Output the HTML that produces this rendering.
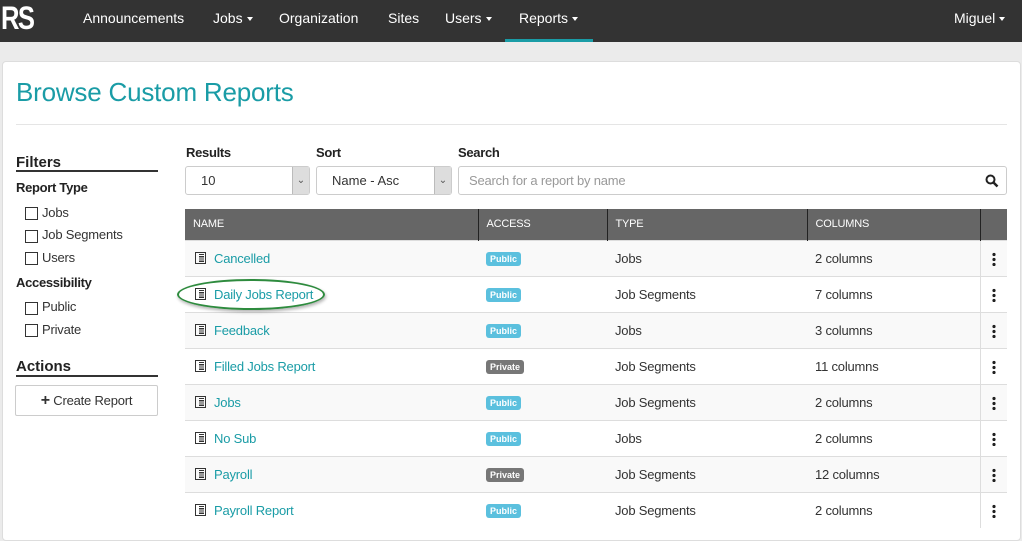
<!DOCTYPE html>
<html><head><meta charset="utf-8"><style>
*{box-sizing:border-box;margin:0;padding:0}
body{width:1022px;height:528px;overflow:hidden;background:#ebebeb;font-family:"Liberation Sans",sans-serif;font-size:13px;color:#333;position:relative}
.a{position:absolute}
.nav{left:0;top:0;width:1022px;height:42px;background:#333}
.nav span{position:absolute;top:10px;color:#fff;font-size:14px;white-space:nowrap}
.car{display:inline-block;width:0;height:0;border-left:3.5px solid transparent;border-right:3.5px solid transparent;border-top:4px solid #fff;vertical-align:middle;margin-left:4px}
.card{left:2px;top:61px;width:1019px;height:480px;background:#fff;border:1px solid #ddd;border-radius:4px}
h1{position:absolute;left:16px;top:77px;font-size:26px;font-weight:normal;color:#1a9ca6;letter-spacing:-0.2px}
.hr{left:16px;top:124px;width:991px;height:1px;background:#e5e5e5}
.lbl{font-weight:bold;font-size:13px;color:#222;letter-spacing:-0.3px}
.cb{position:absolute;width:13px;height:13px;border:1px solid #333;background:#fff}
.ft{position:absolute;font-size:13px;color:#333;letter-spacing:-0.2px}
.sel{position:absolute;height:29px;border:1px solid #ccc;border-radius:3px;background:#fff;font-size:13px;color:#333}
.sel .ar{position:absolute;right:0;top:0;width:17px;height:27px;background:#ddd;border-left:1px solid #bbb;text-align:center;font-size:10px;line-height:27px;color:#555}
table{position:absolute;left:185px;top:209px;width:822px;border-collapse:collapse;letter-spacing:-0.2px}
th{background:#666;color:#fff;font-weight:normal;font-size:11px;text-align:left;height:31px;padding-left:8px;border-right:1px solid #222}
th:last-child{border-right:none}
td{height:36px;border-top:1px solid #ddd;padding-left:8px;font-size:13px;color:#333}
tr:nth-child(even) td{background:#f9f9f9}
td.n{color:#1a9ca6;padding-left:10px}
td.d{border-left:1px solid #ddd;text-align:center;padding:0}
.dots{display:inline-block;width:4px;height:14px;background:radial-gradient(circle,#222 1.6px,transparent 1.8px) 0 0/4px 5px repeat-y;vertical-align:middle}
.ic{display:inline-block;width:11px;height:12px;border:1.5px solid #333;margin-right:8px;vertical-align:-1px;background:repeating-linear-gradient(#fff 0 1px,#333 1px 2.2px);background-clip:content-box;padding:1px 1px 1px 3px}
.bd{display:inline-block;font-size:9px;font-weight:bold;color:#fff;padding:2px 4px;border-radius:3px;background:#5bc0de;letter-spacing:0}
.bd.p{background:#777}
</style></head><body>
<div class="a nav">
<span style="left:1px;top:0px;font-size:32px;font-weight:bold;letter-spacing:-2px;transform:scaleX(.8);transform-origin:left">RS</span>
<span style="left:83px">Announcements</span>
<span style="left:213px">Jobs<i class="car"></i></span>
<span style="left:279px">Organization</span>
<span style="left:388px">Sites</span>
<span style="left:445px">Users<i class="car"></i></span>
<span style="left:519px">Reports<i class="car"></i></span>
<span style="left:954px">Miguel<i class="car"></i></span>
<div class="a" style="left:505px;top:39px;width:88px;height:3px;background:#1a9ca6"></div>
</div>
<div class="a card"></div>
<h1>Browse Custom Reports</h1>
<div class="a hr"></div>
<div class="a" style="left:16px;top:154px;font-size:15px;font-weight:bold;color:#222">Filters</div>
<div class="a" style="left:16px;top:170px;width:142px;height:2px;background:#333"></div>
<div class="a lbl" style="left:16px;top:180px">Report Type</div>
<div class="cb" style="left:25px;top:207px"></div><div class="ft" style="left:42px;top:205px">Jobs</div>
<div class="cb" style="left:25px;top:230px"></div><div class="ft" style="left:42px;top:227px">Job Segments</div>
<div class="cb" style="left:25px;top:252px"></div><div class="ft" style="left:42px;top:250px">Users</div>
<div class="a lbl" style="left:16px;top:275px">Accessibility</div>
<div class="cb" style="left:25px;top:302px"></div><div class="ft" style="left:42px;top:299px">Public</div>
<div class="cb" style="left:25px;top:324px"></div><div class="ft" style="left:42px;top:322px">Private</div>
<div class="a" style="left:16px;top:358px;font-size:15px;font-weight:bold;color:#222">Actions</div>
<div class="a" style="left:16px;top:375px;width:142px;height:2px;background:#333"></div>
<div class="a" style="left:15px;top:385px;width:143px;height:31px;border:1px solid #ccc;border-radius:2px;text-align:center;line-height:29px;font-size:13px;color:#333;letter-spacing:-0.2px"><b style="font-size:16px">+</b> Create Report</div>
<div class="a lbl" style="left:186px;top:145px">Results</div>
<div class="a lbl" style="left:316px;top:145px">Sort</div>
<div class="a lbl" style="left:458px;top:145px">Search</div>
<div class="sel" style="left:185px;top:166px;width:125px"><span class="a" style="left:15px;top:6px">10</span><div class="ar">&#8964;</div></div>
<div class="sel" style="left:316px;top:166px;width:136px"><span class="a" style="left:15px;top:6px">Name - Asc</span><div class="ar">&#8964;</div></div>
<div class="sel" style="left:458px;top:166px;width:549px"><span class="a" style="left:10px;top:6px;color:#999;letter-spacing:-0.2px">Search for a report by name</span>
<svg class="a" style="right:7px;top:7px" width="14" height="14" viewBox="0 0 14 14"><circle cx="5.5" cy="5.5" r="4" fill="none" stroke="#222" stroke-width="2"/><path d="M8.5 8.5L12.5 12.5" stroke="#222" stroke-width="2.5"/></svg></div>
<table>
<tr><th style="width:293px">NAME</th><th style="width:129px">ACCESS</th><th style="width:200px">TYPE</th><th style="width:173px">COLUMNS</th><th></th></tr>
<tr><td class="n"><i class="ic"></i>Cancelled</td><td><span class="bd">Public</span></td><td>Jobs</td><td>2 columns</td><td class="d"><i class="dots"></i></td></tr>
<tr><td class="n"><i class="ic"></i>Daily Jobs Report</td><td><span class="bd">Public</span></td><td>Job Segments</td><td>7 columns</td><td class="d"><i class="dots"></i></td></tr>
<tr><td class="n"><i class="ic"></i>Feedback</td><td><span class="bd">Public</span></td><td>Jobs</td><td>3 columns</td><td class="d"><i class="dots"></i></td></tr>
<tr><td class="n"><i class="ic"></i>Filled Jobs Report</td><td><span class="bd p">Private</span></td><td>Job Segments</td><td>11 columns</td><td class="d"><i class="dots"></i></td></tr>
<tr><td class="n"><i class="ic"></i>Jobs</td><td><span class="bd">Public</span></td><td>Job Segments</td><td>2 columns</td><td class="d"><i class="dots"></i></td></tr>
<tr><td class="n"><i class="ic"></i>No Sub</td><td><span class="bd">Public</span></td><td>Jobs</td><td>2 columns</td><td class="d"><i class="dots"></i></td></tr>
<tr><td class="n"><i class="ic"></i>Payroll</td><td><span class="bd p">Private</span></td><td>Job Segments</td><td>12 columns</td><td class="d"><i class="dots"></i></td></tr>
<tr><td class="n"><i class="ic"></i>Payroll Report</td><td><span class="bd">Public</span></td><td>Job Segments</td><td>2 columns</td><td class="d"><i class="dots"></i></td></tr>
</table>
<div class="a" style="left:177px;top:279px;width:148px;height:31px;border:2px solid #2e8b3e;border-radius:50%;box-shadow:1px 2px 3px rgba(0,0,0,.3)"></div>
</body></html>
